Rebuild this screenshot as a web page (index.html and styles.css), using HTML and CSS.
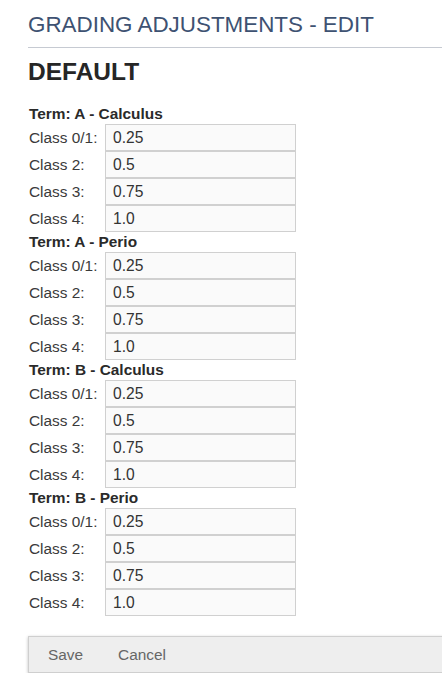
FILE: index.html
```html
<!DOCTYPE html>
<html>
<head>
<meta charset="utf-8">
<link rel="stylesheet" href="styles.css">
</head>
<body>
<div class="page">
  <h1 class="title">GRADING ADJUSTMENTS - EDIT</h1>
  <h2 class="subtitle">DEFAULT</h2>
  <form class="form">
    <section class="group">
      <div class="term">Term: A - Calculus</div>
      <div class="row"><label class="lbl">Class 0/1:</label><input class="inp" value="0.25"></div>
      <div class="row"><label class="lbl">Class 2:</label><input class="inp" value="0.5"></div>
      <div class="row"><label class="lbl">Class 3:</label><input class="inp" value="0.75"></div>
      <div class="row"><label class="lbl">Class 4:</label><input class="inp" value="1.0"></div>
    </section>
    <section class="group">
      <div class="term">Term: A - Perio</div>
      <div class="row"><label class="lbl">Class 0/1:</label><input class="inp" value="0.25"></div>
      <div class="row"><label class="lbl">Class 2:</label><input class="inp" value="0.5"></div>
      <div class="row"><label class="lbl">Class 3:</label><input class="inp" value="0.75"></div>
      <div class="row"><label class="lbl">Class 4:</label><input class="inp" value="1.0"></div>
    </section>
    <section class="group">
      <div class="term">Term: B - Calculus</div>
      <div class="row"><label class="lbl">Class 0/1:</label><input class="inp" value="0.25"></div>
      <div class="row"><label class="lbl">Class 2:</label><input class="inp" value="0.5"></div>
      <div class="row"><label class="lbl">Class 3:</label><input class="inp" value="0.75"></div>
      <div class="row"><label class="lbl">Class 4:</label><input class="inp" value="1.0"></div>
    </section>
    <section class="group">
      <div class="term">Term: B - Perio</div>
      <div class="row"><label class="lbl">Class 0/1:</label><input class="inp" value="0.25"></div>
      <div class="row"><label class="lbl">Class 2:</label><input class="inp" value="0.5"></div>
      <div class="row"><label class="lbl">Class 3:</label><input class="inp" value="0.75"></div>
      <div class="row"><label class="lbl">Class 4:</label><input class="inp" value="1.0"></div>
    </section>
    <div class="actions">
      <span class="btn">Save</span>
      <span class="btn">Cancel</span>
    </div>
  </form>
</div>
</body>
</html>
```

FILE: styles.css
```css
html, body {
  margin: 0;
  padding: 0;
  background: #ffffff;
  overflow: hidden;
}
body {
  font-family: "Liberation Sans", Arial, sans-serif;
  color: #333333;
}
.page {
  padding: 13px 0 0 28px;
}
.title {
  margin: 0;
  font-size: 22.4px;
  line-height: 24px;
  font-weight: normal;
  color: #3e5272;
  padding-bottom: 10px;
  border-bottom: 1px solid #c6cad2;
}
.subtitle {
  margin: 10px 0 0 0;
  font-size: 24.5px;
  line-height: 28px;
  font-weight: bold;
  color: #262626;
}
.form {
  margin-top: 18px;
}
.group {
  display: flex;
  flex-direction: column;
}
.term {
  font-size: 15.4px;
  line-height: 20px;
  font-weight: bold;
  color: #2a2a2a;
  padding-left: 1px;
}
.row {
  display: flex;
  align-items: center;
  height: 27px;
}
.lbl {
  width: 76px;
  padding-left: 1px;
  font-size: 15.4px;
  color: #3a3a3a;
}
.inp {
  box-sizing: border-box;
  width: 191px;
  height: 27px;
  margin: 0;
  padding: 0 7px;
  border: 1px solid #d0d0d0;
  background: #fafafa;
  font-family: "Liberation Sans", Arial, sans-serif;
  font-size: 15.6px;
  color: #333333;
  outline: none;
}
.actions {
  margin-top: 20px;
  height: 37px;
  box-sizing: border-box;
  margin-right: -20px;
  display: flex;
  align-items: center;
  gap: 35px;
  padding-left: 19px;
  background: #eeeeee;
  border: 1px solid #cfcfcf;
  box-shadow: 0 1px 3px rgba(0,0,0,0.25);
}
.btn {
  font-size: 15.4px;
  color: #666666;
}
```
